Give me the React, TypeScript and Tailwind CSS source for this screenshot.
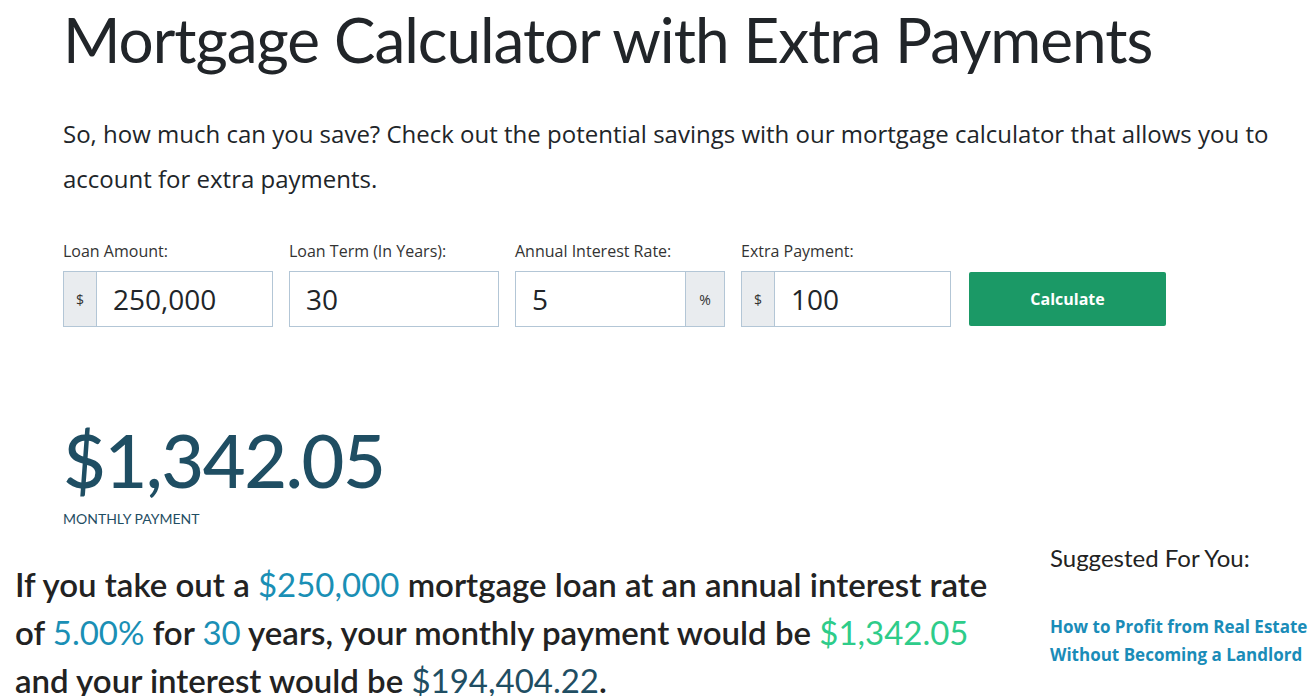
import React from "react";

const nunito = { fontFamily: "Lato, 'Noto Sans', sans-serif" };
const openSans = { fontFamily: "'Open Sans', 'Noto Sans', sans-serif" };

function Field({
  label,
  value,
  prefix,
  suffix,
}: {
  label: string;
  value: string;
  prefix?: string;
  suffix?: string;
}) {
  return (
    <div className="w-[210px] flex flex-col">
      <div className="text-[16px] leading-[22px] text-[#333] h-[22px]">{label}</div>
      <div className="mt-[9px] flex h-[56px] border border-[#b3c6d6]">
        {prefix && (
          <div className="w-[33px] flex items-center justify-center bg-[#e9ecef] border-r border-[#b3c6d6] text-[14px] text-[#333]">
            {prefix}
          </div>
        )}
        <div className="flex-1 flex items-center pl-[16px] text-[28px] text-[#212529]">{value}</div>
        {suffix && (
          <div className="w-[39px] flex items-center justify-center bg-[#e9ecef] border-l border-[#b3c6d6] text-[14px] text-[#333]">
            {suffix}
          </div>
        )}
      </div>
    </div>
  );
}

export default function App() {
  return (
    <div className="w-[1313px] h-[696px] overflow-hidden bg-white" style={openSans}>
      <div className="pl-[63px]">
        <h1 className="text-[62px] leading-[78px] tracking-[-1px] font-normal text-[#212529]" style={nunito}>
          Mortgage Calculator with Extra Payments
        </h1>
        <p className="mt-[33px] text-[24px] leading-[45px] text-[#212529] w-[1225px]">
          So, how much can you save? Check out the potential savings with our mortgage calculator that allows you to account for extra payments.
        </p>
        <div className="mt-[39px] flex gap-[16px] items-end">
          <Field label="Loan Amount:" prefix="$" value="250,000" />
          <Field label="Loan Term (In Years):" value="30" />
          <Field label="Annual Interest Rate:" suffix="%" value="5" />
          <Field label="Extra Payment:" prefix="$" value="100" />
          <button className="ml-[2px] mb-[1px] w-[197px] h-[54px] bg-[#1b9966] text-white text-[16px] font-bold rounded-[2px]">
            Calculate
          </button>
        </div>
        <div className="mt-[94px] text-[74px] leading-[77px] tracking-[-1.5px] text-[#1f4e63] font-medium" style={nunito}>
          $1,342.05
        </div>
        <div className="mt-[11px] text-[14px] leading-[20px] text-[#1f4e63] uppercase" style={nunito}>
          Monthly Payment
        </div>
      </div>
      <div className="pl-[15px] flex">
        <p className="mt-[31px] w-[1000px] shrink-0 text-[33px] leading-[48px] font-semibold text-[#222]" style={nunito}>
          If you take out a <span className="text-[#1a8fb5] font-normal">$250,000</span> mortgage loan at an annual interest rate of{" "}
          <span className="text-[#1a8fb5] font-normal">5.00%</span> for <span className="text-[#1a8fb5] font-normal">30</span> years, your monthly payment would be{" "}
          <span className="text-[#2ecc8a] font-normal">$1,342.05</span> and your interest would be{" "}
          <span className="text-[#1f4e63] font-normal">$194,404.22</span>.
        </p>
        <div className="ml-[35px] mt-[13px] w-[263px] shrink-0">
          <div className="text-[24px] leading-[32px] text-[#222]" style={nunito}>
            Suggested For You:
          </div>
          <a className="block mt-[39px] text-[17px] leading-[28px] font-bold text-[#1a8cb8]" style={openSans}>
            How to Profit from Real Estate Without Becoming a Landlord
          </a>
        </div>
      </div>
    </div>
  );
}
